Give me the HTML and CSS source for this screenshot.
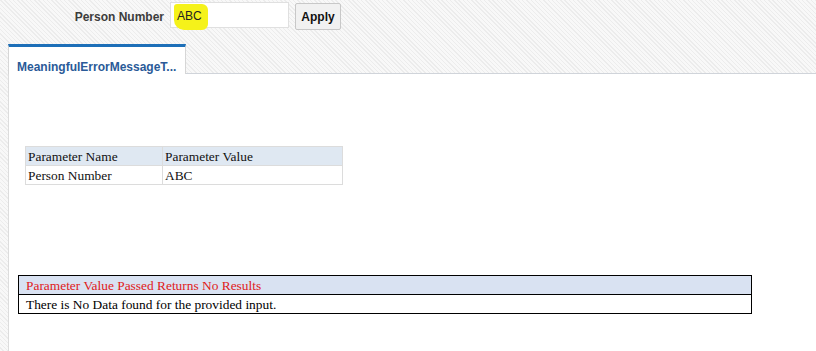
FILE: index.html
```html
<!DOCTYPE html>
<html>
<head>
<meta charset="utf-8">
<link rel="stylesheet" href="styles.css">
</head>
<body>
<div class="page">
  <div class="toolbar">
    <label class="label">Person Number</label>
    <div class="input"><span class="hl">ABC</span></div>
    <button class="apply">Apply</button>
  </div>
  <div class="tabs">
    <div class="tab">MeaningfulErrorMessageT...</div>
    <div class="tabline"></div>
  </div>
  <div class="content">
    <table class="params">
      <tr class="head"><td class="c1">Parameter Name</td><td>Parameter Value</td></tr>
      <tr><td class="c1">Person Number</td><td>ABC</td></tr>
    </table>
    <table class="err">
      <tr class="head"><td>Parameter Value Passed Returns No Results</td></tr>
      <tr><td>There is No Data found for the provided input.</td></tr>
    </table>
  </div>
</div>
</body>
</html>
```
FILE: styles.css
```css
html, body {
  margin: 0;
  padding: 0;
}
body {
  width: 816px;
  height: 351px;
  overflow: hidden;
  background: repeating-linear-gradient(45deg, #f8f8f8 0 2px, #ececec 2px 3px);
  font-family: "Liberation Sans", Arial, sans-serif;
}
.page {
  display: flex;
  flex-direction: column;
  height: 351px;
}
.toolbar {
  display: flex;
  align-items: flex-start;
  height: 40px;
}
.label {
  width: 164px;
  text-align: right;
  font-weight: bold;
  font-size: 12px;
  color: #3c3c3c;
  margin-top: 10px;
}
.input {
  margin-left: 6px;
  margin-top: 2px;
  width: 117px;
  height: 24px;
  background: #fff;
  border: 1px solid #e0e0e0;
  position: relative;
}
.hl {
  position: absolute;
  left: 3px;
  top: 1px;
  width: 34px;
  height: 26px;
  background: #f5f21a;
  border-radius: 3px 6px 6px 10px;
  font-size: 12px;
  color: #222;
  padding-left: 3px;
  box-sizing: border-box;
  line-height: 24px;
}
.apply {
  margin-left: 6px;
  margin-top: 3px;
  width: 46px;
  height: 27px;
  background: #f1f1f1;
  border: 1px solid #c8c8c8;
  border-radius: 2px;
  font-family: "Liberation Sans", Arial, sans-serif;
  font-weight: bold;
  font-size: 12px;
  color: #111;
  padding: 0;
}
.tabs {
  display: flex;
  align-items: flex-end;
  margin-left: 8px;
  height: 34px;
}
.tab {
  width: 178px;
  height: 30px;
  box-sizing: border-box;
  background: #fff;
  border-top: 3px solid #1d6fb8;
  border-right: 1px solid #d6d6d6;
  border-left: 1px solid #d6d6d6;
  font-weight: bold;
  font-size: 12px;
  color: #2a5a98;
  padding: 13px 0 0 8px;
  white-space: nowrap;
}
.tabline {
  flex: 1;
  border-bottom: 1px solid #d0d4da;
}
.content {
  flex: 1;
  margin-left: 8px;
  background: #fff;
  border-left: 1px solid #dcdcdc;
  padding-top: 72px;
  font-family: "Liberation Serif", "Times New Roman", serif;
  font-size: 13.4px;
}
table {
  border-collapse: collapse;
}
.params {
  margin-left: 16px;
  width: 318px;
}
.params td {
  border: 1px solid #dcdcdc;
  height: 18px;
  padding: 0 2px;
  color: #111;
  line-height: 17px;
}
.params .c1 {
  width: 132px;
}
.params .head td {
  background: #dfe8f2;
}
.err {
  margin-left: 9px;
  margin-top: 90px;
  width: 734px;
}
.err td {
  border: 1px solid #000;
  height: 18px;
  padding: 0 7px;
  line-height: 17px;
  color: #000;
}
.err .head td {
  background: #d9e2f2;
  color: #e01a1a;
}
```
